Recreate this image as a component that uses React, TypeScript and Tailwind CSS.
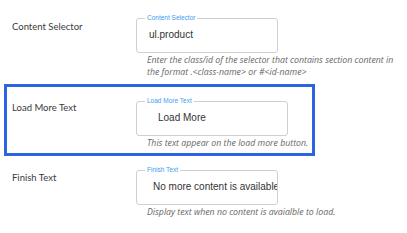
import React from 'react'

type FieldProps = {
  label: string
  legend: string
  value: string
  help: React.ReactNode
  width: string
  textPad: string
  labelTop: string
}

function Field({ label, legend, value, help, width, textPad, labelTop }: FieldProps) {
  return (
    <div className="flex items-start">
      <div className={`w-[124px] shrink-0 text-[9.5px] leading-[14px] text-[#3a3a3a] ${labelTop}`}>
        {label}
      </div>
      <div className="flex flex-col">
        <fieldset className={`border border-[#cfcfcf] rounded-[3px] ${width} m-0 p-0 min-w-0`}>
          <legend className="ml-[8px] px-[2px] text-[6.5px] leading-[8px] text-[#3d9df0] font-['Liberation_Sans',Arial,sans-serif]">
            {legend}
          </legend>
          <div
            className={`h-[30px] ${textPad} pt-[7px] whitespace-nowrap overflow-hidden text-[10px] leading-[12px] text-[#333] font-['Liberation_Sans',Arial,sans-serif]`}
          >
            {value}
          </div>
        </fieldset>
        <p className="mt-[1px] ml-[11px] w-[250px] text-[8.75px] leading-[12px] italic text-[#666] font-['Open_Sans',sans-serif]">
          {help}
        </p>
      </div>
    </div>
  )
}

export default function App() {
  return (
    <div className="w-[407px] h-[233px] bg-white font-['Lato',sans-serif] overflow-hidden">
      <div className="pl-3 pt-[14px]">
        <Field
          label="Content Selector"
          legend="Content Selector"
          value="ul.product"
          width="w-[142px]"
          textPad="pl-[12px]"
          labelTop="mt-[6px]"
          help={
            <>
              Enter the class/id of the selector that contains section content in the format
              .&lt;class-name&gt; or #&lt;id-name&gt;
            </>
          }
        />
      </div>

      <div className="ml-[4px] mt-[6px] w-[311px] border-[3px] border-[#2d62e3] pl-[5px] pt-[10px] pb-[4px]">
        <Field
          label="Load More Text"
          legend="Load More Text"
          value="Load More"
          width="w-[152px]"
          textPad="pl-[21px]"
          labelTop="mt-[4px]"
          help="This text appear on the load more button."
        />
      </div>

      <div className="pl-3 mt-[10px]">
        <Field
          label="Finish Text"
          legend="Finish Text"
          value="No more content is available"
          width="w-[142px]"
          textPad="pl-[16px] pr-[14px]"
          labelTop="mt-[5px]"
          help="Display text when no content is avaialble to load."
        />
      </div>
    </div>
  )
}
